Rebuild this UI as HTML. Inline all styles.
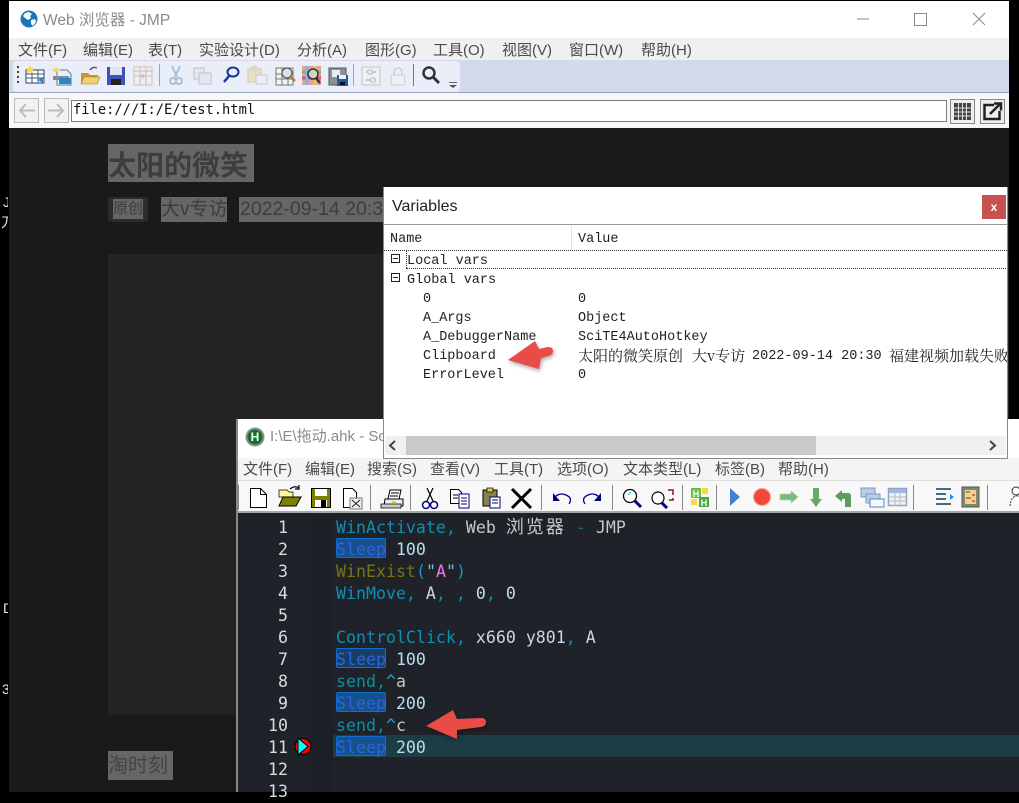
<!DOCTYPE html>
<html lang="zh"><head><meta charset="utf-8"><title>Web 浏览器 - JMP</title>
<style>
html,body{margin:0;padding:0;background:#000}
body{position:relative;width:1019px;height:792px;overflow:hidden;font-family:"Liberation Sans","Noto Sans CJK SC",sans-serif}
.a{position:absolute}
.t{position:absolute;white-space:nowrap}
.m{position:absolute;white-space:nowrap;font-size:15px;line-height:22px;color:#4a4a4a}
.sel{position:absolute;background:#666;color:#3d3d3d;white-space:nowrap}
.v{position:absolute;white-space:nowrap;font-family:"Liberation Mono","Noto Serif CJK SC",monospace;font-size:13.5px;line-height:19px;color:#222}
.cj{font-family:"Noto Serif CJK SC",serif;font-size:15px}
.ln{position:absolute;left:238px;width:50px;margin-top:2px;text-align:right;font-family:"DejaVu Sans Mono",monospace;font-size:16.6px;line-height:22px;color:#d8dde0}
.c{position:absolute;left:336px;margin-top:2px;white-space:pre;font-family:"DejaVu Sans Mono","Noto Sans CJK SC",monospace;font-size:16.6px;line-height:22px;color:#b9dcef}
.k{color:#0d8fb3}.s{color:#0b8f9e}
.bx{position:absolute;left:336px;width:48px;height:18px;background:#17518c;border:1px solid #0f6fd0;border-radius:2px}
.slp{color:#2f62dc}
</style></head><body>

<!-- left strip desktop -->
<div class="a" style="left:0;top:0;width:8px;height:792px;background:#000;overflow:hidden">
<span class="t" style="left:3px;top:193px;color:#dfe9ff;font-size:14px;line-height:18px">J</span>
<span class="t" style="left:1px;top:213px;color:#dfe9ff;font-size:14px;line-height:18px">刀</span>
<span class="t" style="left:3px;top:599px;color:#dfe9ff;font-size:14px;line-height:18px">D</span>
<span class="t" style="left:2px;top:680px;color:#dfe9ff;font-size:14px;line-height:18px">3</span>
</div>

<!-- web window -->
<div class="a" style="left:9px;top:1px;width:1000px;height:37px;background:#fff"></div>
<div class="a" style="left:9px;top:38px;width:1000px;height:22px;background:#f0f0f0"></div>
<div class="a" style="left:9px;top:60px;width:1000px;height:33px;background:#d3d9ec;border-bottom:1px solid #98a3c6;box-sizing:border-box"></div>
<div class="a" style="left:13px;top:61px;width:447px;height:31px;background:#e9eef9;border-radius:4px"></div>
<div class="a" style="left:9px;top:93px;width:1000px;height:35px;background:#f7f7f7"></div>
<div class="a" style="left:9px;top:128px;width:1000px;height:664px;background:#1a1a1a"></div>

<svg class="a" style="left:20px;top:10px" width="19" height="19" viewBox="0 0 19 19"><circle cx="9" cy="9" r="8.5" fill="#1b78b8"/><path d="M5 3l4-1 3 2-2 2 1 2-3 2-3-2-2-2zM11 10l4-1 1 3-3 4-2-2z" fill="#fff"/></svg>
<span class="t" style="left:43px;top:10px;font-size:15.500px;line-height:22px;color:#8a8a8a">Web 浏览器 - JMP</span>
<svg class="a" style="left:850px;top:8px" width="150" height="22"><path d="M7 11h12" stroke="#8a8a8a" fill="none"/><rect x="64.500" y="5.500" width="12" height="12" fill="none" stroke="#8a8a8a"/><path d="M123 5l12 12M135 5l-12 12" stroke="#888" fill="none"/></svg>

<span class="m" style="left:18px;top:40px">文件(F)</span>
<span class="m" style="left:83px;top:40px">编辑(E)</span>
<span class="m" style="left:148px;top:40px">表(T)</span>
<span class="m" style="left:199px;top:40px">实验设计(D)</span>
<span class="m" style="left:297px;top:40px">分析(A)</span>
<span class="m" style="left:365px;top:40px">图形(G)</span>
<span class="m" style="left:433px;top:40px">工具(O)</span>
<span class="m" style="left:502px;top:40px">视图(V)</span>
<span class="m" style="left:569px;top:40px">窗口(W)</span>
<span class="m" style="left:641px;top:40px">帮助(H)</span>

<!-- web toolbar icons -->
<svg class="a" style="left:0;top:60px" width="470" height="33" viewBox="0 60 470 33">
<g fill="#444"><rect x="17" y="66" width="2" height="2"/><rect x="17" y="71" width="2" height="2"/><rect x="17" y="76" width="2" height="2"/><rect x="17" y="81" width="2" height="2"/></g>
<rect x="26" y="70" width="18" height="13" fill="#fff" stroke="#345"/><path d="M26 74h18M26 78h18M32 70v13M38 70v13" stroke="#457"/><path d="M30 65l1.500 3 3 .5-2 2 .5 3-3-1.500-3 1.500.5-3-2-2 3-.5z" fill="#f2da5a"/><path d="M38 80l5-3v6z" fill="#2a7fc8"/>
<path d="M57 70h10l4 4v11H57z" fill="#e8f0f6" stroke="#5a7f96"/><path d="M53 76h16v4H53z" fill="#889"/><path d="M56 66l1.500 3 3 .5-2 2-2.500 1-2.500-1-2-2 3-.5z" fill="#f2da5a"/><rect x="59" y="78" width="12" height="6" fill="#2e86c0"/>
<path d="M81 73h7l2 2h8v9H81z" fill="#c9962e"/><path d="M81 84l3-7h16l-3 7z" fill="#f2cf72" stroke="#a87a20" stroke-width=".6"/><path d="M90 70q3-4 7-2" stroke="#556" fill="none" stroke-width="1.500"/>
<rect x="107" y="67" width="18" height="18" fill="#3d4fb8"/><rect x="110" y="67" width="12" height="8" fill="#dfe3ef"/><rect x="111" y="79" width="10" height="6" fill="#222"/>
<rect x="134" y="67" width="18" height="18" fill="#f0eeee" stroke="#c8c4c4"/><path d="M134 71h18M140 67v18M146 67v18M134 76h18" stroke="#d3b8b8" fill="none"/><path d="M133 85l8-8 2 2 2-5-5 1 2 1-8 8z" fill="#a8c4e8"/>
<rect x="159" y="64" width="1" height="22" fill="#9aa"/>
<path d="M172 66l5 11M180 66l-5 11" stroke="#aebed0" stroke-width="2" fill="none"/><circle cx="173" cy="81" r="3" fill="none" stroke="#a6bfd8" stroke-width="2"/><circle cx="179" cy="81" r="3" fill="none" stroke="#a6bfd8" stroke-width="2"/>
<rect x="194" y="68" width="10" height="11" fill="#e3e8f0" stroke="#b7c2d2"/><rect x="199" y="73" width="12" height="11" fill="#e3e8f0" stroke="#b7c2d2"/>
<ellipse cx="233" cy="72" rx="5.500" ry="4.500" fill="none" stroke="#12389e" stroke-width="2"/><path d="M229 76l-5 6" stroke="#12389e" stroke-width="2.500"/>
<rect x="248" y="69" width="13" height="13" fill="#e9dfc8" stroke="#d5c8a8"/><rect x="251" y="66" width="6" height="5" fill="#dcd6c8"/><rect x="256" y="75" width="11" height="9" fill="#eceef2" stroke="#c5cad2"/>
<rect x="276" y="68" width="17" height="17" fill="#f3f3f3" stroke="#777"/><path d="M276 74h17M276 79h17M282 68v17M288 68v17" stroke="#777"/><circle cx="287" cy="73" r="5" fill="#dde" stroke="#443"/><path d="M291 77l4 4" stroke="#b87a20" stroke-width="2.500"/>
<rect x="302" y="66" width="19" height="19" fill="#e6a0a0"/><path d="M302 72h19" stroke="#6fbf6f" stroke-width="3"/><path d="M302 78h19" stroke="#d05a7a" stroke-width="3"/><path d="M307 66v19" stroke="#7fb6d8" stroke-width="3"/><path d="M315 66v19" stroke="#dcc860" stroke-width="3"/><circle cx="313" cy="74" r="5" fill="#ddd" fill-opacity=".7" stroke="#333" stroke-width="1.500"/><path d="M316 78l4 5" stroke="#333" stroke-width="2.500"/>
<path d="M329 68h17v17h-17z" fill="#8e8e9e" stroke="#555"/><rect x="332" y="70" width="8" height="7" fill="#e6ecf4"/><rect x="337" y="75" width="11" height="11" fill="#1d5da0"/><rect x="339" y="75" width="7" height="4" fill="#eef"/><rect x="340" y="82" width="5" height="3" fill="#111"/>
<rect x="353" y="64" width="1" height="22" fill="#9aa"/>
<rect x="362" y="67" width="18" height="18" fill="#eef0f2" stroke="#c2c6ca" rx="1"/><path d="M366 72h10M366 80h10" stroke="#c4c8cc" stroke-width="2"/><rect x="368" y="70" width="4" height="4" fill="#eef0f2" stroke="#bfc3c7"/><rect x="371" y="78" width="4" height="4" fill="#eef0f2" stroke="#bfc3c7"/>
<rect x="391" y="75" width="14" height="10" fill="#eef0f2" stroke="#cbcfd3" rx="1"/><path d="M394 75v-3a4 4 0 018 0v3" fill="none" stroke="#cbcfd3" stroke-width="1.500"/>
<rect x="413" y="64" width="1" height="22" fill="#777"/>
<circle cx="429" cy="73" r="5.500" fill="none" stroke="#333" stroke-width="2.500"/><path d="M433 77l6 6" stroke="#333" stroke-width="3"/>
<rect x="449" y="82" width="8" height="1" fill="#666"/><path d="M449 85h8l-4 3z" fill="#555"/>
</svg>

<!-- url row -->
<svg class="a" style="left:14px;top:98px" width="56" height="27"><rect x=".5" y=".5" width="24" height="24" fill="#f2f2f2" stroke="#bbb"/><path d="M21 12.500H6M12 6l-6 6.500L12 19" fill="none" stroke="#bdbdbd" stroke-width="2"/><rect x="30.500" y=".5" width="24" height="24" fill="#f2f2f2" stroke="#bbb"/><path d="M34 12.500h15M43 6l6 6.500L43 19" fill="none" stroke="#bdbdbd" stroke-width="2"/></svg>
<div class="a" style="left:71px;top:100px;width:874px;height:20px;background:#fff;border:1px solid #7c7c7c"></div>
<span class="t" style="left:73px;top:100px;font-family:'DejaVu Sans Mono',monospace;font-size:13.75px;line-height:20px;color:#111">file:///I:/E/test.html</span>
<svg class="a" style="left:950px;top:99px" width="56" height="26"><rect x=".5" y=".5" width="24" height="24" fill="#eee" stroke="#888"/><rect x="4" y="4" width="17" height="17" fill="#444"/><path d="M4 9h17M4 13h17M4 17h17M8.500 4v17M12.500 4v17M16.500 4v17" stroke="#ddd"/><rect x="30.500" y=".5" width="24" height="24" fill="#eee" stroke="#888"/><path d="M44 6h-9.500v14h15v-8" fill="none" stroke="#222" stroke-width="2.500"/><path d="M40 15l10-10M44 4.500h7v7" fill="none" stroke="#222" stroke-width="2.500"/></svg>

<!-- page content -->
<div class="sel" style="left:108px;top:144px;width:146px;height:38px;font-weight:bold;font-size:28px;line-height:43px;overflow:hidden">太阳的微笑</div>
<div class="a" style="left:108px;top:197px;width:40px;height:25px;background:#2b2b2b;border-radius:3px"></div>
<div class="sel" style="left:113px;top:199px;width:30px;height:20px;font-size:15px;line-height:20px">原创</div>
<div class="sel" style="left:161px;top:197px;width:66px;height:25px;font-size:19px;line-height:25px">大v专访</div>
<div class="sel" style="left:239px;top:197px;width:150px;height:25px;font-size:19.500px;line-height:25px;text-indent:1px;overflow:hidden">2022-09-14 20:30</div>
<div class="a" style="left:108px;top:254px;width:901px;height:461px;background:#232323"></div>
<div class="sel" style="left:108px;top:751px;width:65px;height:29px;font-size:20px;line-height:31px;color:#444">淘时刻</div>

<!-- scite window -->
<div class="a" style="left:236px;top:419px;width:783px;height:61px;background:#fff"></div>
<div class="a" style="left:236px;top:419px;width:2px;height:373px;background:#888"></div>
<svg class="a" style="left:245px;top:427px" width="20" height="20"><circle cx="10" cy="10" r="9.500" fill="#8f8f8f"/><circle cx="10" cy="10" r="7.500" fill="#14702e"/><text x="10" y="14" font-size="12" font-family="Liberation Sans" font-weight="bold" text-anchor="middle" fill="#fff">H</text></svg>
<span class="t" style="left:270px;top:426px;font-size:15px;line-height:22px;color:#8a8a8a">I:\E\拖动.ahk - SciTE4AutoHotkey</span>
<div class="a" style="left:238px;top:458px;width:781px;height:22px;background:#f4f4f4"></div>
<span class="m" style="left:243px;top:459px">文件(F)</span>
<span class="m" style="left:305px;top:459px">编辑(E)</span>
<span class="m" style="left:367px;top:459px">搜索(S)</span>
<span class="m" style="left:430px;top:459px">查看(V)</span>
<span class="m" style="left:494px;top:459px">工具(T)</span>
<span class="m" style="left:557px;top:459px">选项(O)</span>
<span class="m" style="left:623px;top:459px">文本类型(L)</span>
<span class="m" style="left:715px;top:459px">标签(B)</span>
<span class="m" style="left:778px;top:459px">帮助(H)</span>
<div class="a" style="left:238px;top:480px;width:781px;height:33px;background:#f8f8f8;border-top:1px solid #ddd;border-bottom:2px solid #a8a8a8;box-sizing:border-box"></div>

<svg class="a" style="left:0;top:480px" width="1019" height="34" viewBox="0 480 1019 34">
<g fill="#888"><rect x="238" y="485" width="1" height="25"/><rect x="370" y="485" width="1" height="25"/><rect x="410" y="485" width="1" height="25"/><rect x="541" y="485" width="1" height="25"/><rect x="612" y="485" width="1" height="25"/><rect x="682" y="485" width="1" height="25"/><rect x="716" y="485" width="1" height="25"/><rect x="913" y="485" width="1" height="25"/><rect x="987" y="485" width="1" height="25"/></g>
<path d="M250.500 488.500h10l6 6v13h-16z" fill="#fff" stroke="#000"/><path d="M260.500 488.500v6h6" fill="none" stroke="#000"/>
<path d="M279 490h8l2 2h4v5h-14z" fill="#fff6a0" stroke="#000" stroke-width=".7"/><path d="M279 506l4-9h18l-5 9z" fill="#7f7f00" stroke="#000"/><path d="M290 489q5-4 9-1M299 485v4h-4" fill="none" stroke="#000" stroke-width="1.200"/>
<rect x="311.500" y="488.500" width="19" height="19" fill="#7f7f00" stroke="#000"/><rect x="315" y="489" width="12" height="7" fill="#fff"/><rect x="315" y="500" width="12" height="7" fill="#fff"/><rect x="321" y="500" width="5" height="7" fill="#000"/>
<path d="M343.500 488.500h9l4 4v6h-4v9h-9z" fill="#fff" stroke="#000"/><rect x="350" y="498" width="12" height="11" fill="#eee" stroke="#777"/><path d="M352 500l8 7M360 500l-8 7" stroke="#222"/>
<path d="M385 499h18v7h-19z" fill="#eee" stroke="#000"/><path d="M388 499l2-9h11l-2 9z" fill="#fff" stroke="#000"/><path d="M391 493h8M390 496h8" stroke="#000"/><path d="M381 504h20v4h-20z" fill="#ccc" stroke="#000" stroke-width=".8"/><rect x="392" y="501" width="4" height="2" fill="#dd0"/>
<path d="M427 488l6 13M433 488l-6 13" stroke="#000" fill="none" stroke-width="1.200"/><circle cx="426" cy="505" r="3.500" fill="none" stroke="#00007f" stroke-width="1.500"/><circle cx="434" cy="505" r="3.500" fill="none" stroke="#00007f" stroke-width="1.500"/>
<path d="M450.500 489.500h8l3 3v11h-11z" fill="#fff" stroke="#000"/><rect x="459" y="494" width="10" height="14" fill="#fff" stroke="#00007f"/><path d="M461 498h6M461 501h6M461 504h6" stroke="#00007f"/><path d="M453 495h5M453 498h5" stroke="#000"/>
<rect x="483" y="490" width="14" height="16" fill="#88834a" stroke="#000"/><rect x="487" y="488" width="6" height="4" fill="#ddcc33" stroke="#000" stroke-width=".7"/><rect x="490" y="497" width="10" height="11" fill="#fff" stroke="#00007f"/><path d="M492 500h6M492 503h6" stroke="#00007f"/>
<path d="M512 489l19 19M531 489l-19 19" stroke="#000" stroke-width="3"/>
<path d="M554 498q5-6 12-3t3 9" fill="none" stroke="#00007f" stroke-width="1.300"/><path d="M553 493v8h7z" fill="#00007f"/>
<path d="M600 498q-5-6-12-3t-3 9" fill="none" stroke="#00007f" stroke-width="1.300"/><path d="M601 493v8h-7z" fill="#00007f"/>
<circle cx="630" cy="496" r="6.500" fill="#fff" stroke="#000" stroke-width="1.300"/><path d="M628 495l3-3" stroke="#3bd" stroke-width="1.200"/><path d="M635 501l6 6" stroke="#00007f" stroke-width="3"/>
<circle cx="658" cy="498" r="6" fill="#fff" stroke="#000" stroke-width="1.200"/><path d="M662 503l5 5" stroke="#00007f" stroke-width="3"/><path d="M668 490h5v5M673 498v2h-4" fill="none" stroke="#8b1a1a" stroke-width="1.500"/>
<rect x="691" y="488" width="10" height="10" fill="#6fbb4f"/><rect x="699" y="497" width="10" height="10" fill="#4aa83f"/><path d="M702 488h6v6h-6zM691 499h6v6h-6z" fill="#eedf3a"/><text x="696" y="497" font-size="9" font-weight="bold" font-family="Liberation Sans" text-anchor="middle" fill="#fff">H</text><text x="704" y="506" font-size="9" font-weight="bold" font-family="Liberation Sans" text-anchor="middle" fill="#fff">H</text>
<path d="M730 488l10 9-10 9z" fill="#3f82cf"/>
<circle cx="762" cy="497" r="8.500" fill="#f4473a" stroke="#f3a79f" stroke-width="1.200"/>
<path d="M780 494h11v-3l7 6-7 6v-3h-11z" fill="#7cb87c" stroke="#a8d4a8" stroke-width=".8"/>
<path d="M813 488h6v11h3l-6 8-6-8h3z" fill="#6aa86a"/>
<path d="M851 507v-11q0-3-3-3h-6v-3l-7 6 7 6v-3h3v8z" fill="#5c9c5c"/>
<rect x="861" y="488" width="14" height="9" fill="#b8cce8" stroke="#7a9cc8"/><rect x="866" y="494" width="14" height="9" fill="#b8cce8" stroke="#7a9cc8"/><rect x="870" y="499" width="14" height="8" fill="#f4f8ff" stroke="#5a84b8"/>
<rect x="888.500" y="488.500" width="18" height="17" fill="#eef2f8" stroke="#8ea6c8" stroke-width="1.500"/><rect x="889" y="489" width="17" height="4" fill="#9db8dc"/><path d="M889 497h17M889 501h17M895 493v12M900 493v12" stroke="#bbb"/>
<path d="M936 489h15M936 494h10M936 499h10M936 504h15" stroke="#4a6a7a" stroke-width="2"/><path d="M954 497l-4-3v6z" fill="#1e90ff"/>
<rect x="962" y="487" width="17" height="20" fill="#7e8a6a" stroke="#555"/><rect x="965" y="490" width="11" height="14" fill="#e6d69a"/><path d="M966 492h4M972 495h3M966 498h5M972 501h3" stroke="#d4572a" stroke-width="1.500"/>
<circle cx="1016" cy="491" r="4" fill="#fff" stroke="#333"/><path d="M1010 506q1-9 6-10t8 6" fill="#fff" stroke="#333" stroke-dasharray="2 1"/>
</svg>

<!-- editor -->
<div class="a" style="left:238px;top:513px;width:781px;height:279px;background:#1f2329;overflow:hidden"></div>
<div class="a" style="left:312px;top:515px;width:21px;height:277px;background:#1c2026"></div>
<div class="a" style="left:333px;top:735px;width:686px;height:22px;background:#1c3d44"></div>

<div class="ln" style="top:515px">1</div><div class="ln" style="top:537px">2</div><div class="ln" style="top:559px">3</div><div class="ln" style="top:581px">4</div><div class="ln" style="top:603px">5</div><div class="ln" style="top:625px">6</div><div class="ln" style="top:647px">7</div><div class="ln" style="top:669px">8</div><div class="ln" style="top:691px">9</div><div class="ln" style="top:713px">10</div><div class="ln" style="top:735px">11</div><div class="ln" style="top:757px">12</div><div class="ln" style="top:779px">13</div>

<div class="bx" style="top:538px"></div>
<div class="bx" style="top:648px;background:#173f66"></div>
<div class="bx" style="top:692px"></div>
<div class="bx" style="top:736px"></div>

<div class="c" style="top:515px"><span class="k">WinActivate,</span><span style="color:#c8c8c8"> Web </span><span style="color:#c8c8c8;font-family:'Noto Sans CJK SC',sans-serif;font-size:18px;letter-spacing:2px;line-height:1px">浏览器</span><span style="color:#c8c8c8"> </span><span style="color:#0d6f88">-</span><span style="color:#c8c8c8"> JMP</span></div>
<div class="c" style="top:537px"><span class="slp">Sleep</span> 100</div>
<div class="c" style="top:559px"><span style="color:#76760e">WinExist</span><span style="color:#1296c4">(</span><span style="color:#7cb8e8">"</span><span style="color:#ea78e8">A</span><span style="color:#7cb8e8">"</span><span style="color:#1296c4">)</span></div>
<div class="c" style="top:581px"><span class="k">WinMove,</span><span style="color:#c8d8e0"> A</span><span class="k">, ,</span> 0<span class="k">,</span> 0</div>
<div class="c" style="top:625px"><span class="k">ControlClick,</span><span style="color:#c8d8e0"> x660 y801</span><span class="k">,</span><span style="color:#c8d8e0"> A</span></div>
<div class="c" style="top:647px"><span class="slp">Sleep</span> 100</div>
<div class="c" style="top:669px"><span class="s">send,</span><span style="color:#2aa3c8">^</span><span style="color:#c8c8c8">a</span></div>
<div class="c" style="top:691px"><span class="slp">Sleep</span> 200</div>
<div class="c" style="top:713px"><span class="s">send,</span><span style="color:#2aa3c8">^</span><span style="color:#c8c8c8">c</span></div>
<div class="c" style="top:735px"><span class="slp">Sleep</span> 200</div>

<svg class="a" style="left:293px;top:736px" width="20" height="21"><circle cx="10" cy="10.500" r="8" fill="#f00" stroke="#000"/><path d="M5 2v17l10-8.500z" fill="#0ff" stroke="#000"/></svg>

<!-- arrow 2 -->
<svg class="a" style="left:420px;top:704px;filter:drop-shadow(1px 2px 2px rgba(0,0,0,.35))" width="72" height="42" viewBox="420 704 72 42"><path d="M426 726L453 710 457 719 481 718Q486 718 486 722 486 726 481 727L457 730 457 739Z" fill="#e94c46"/></svg>

<!-- variables window -->
<div class="a" style="left:383px;top:187px;width:625px;height:272px;background:#fff;box-sizing:border-box;border-left:1px solid #888;border-right:1px solid #888;border-bottom:1px solid #888;overflow:hidden">
<div class="a" style="left:0;top:37px;width:623px;height:1px;background:#999"></div>
<span class="t" style="left:8px;top:9px;font-size:16px;line-height:22px;color:#222">Variables</span>
<div class="a" style="left:598px;top:8px;width:24px;height:24px;background:#c75050;color:#fff;text-align:center;font:bold 12px/24px 'Liberation Sans',sans-serif">x</div>
<div class="a" style="left:187px;top:39px;width:1px;height:24px;background:#e4e4e4"></div>
<div class="a" style="left:0;top:63px;width:623px;border-top:1px dotted #333"></div>
<div class="a" style="left:22px;top:81px;width:600px;border-top:1px dotted #333"></div>
<div class="a" style="left:22px;top:64px;height:17px;border-left:1px dotted #333"></div>
<span class="v" style="left:6px;top:43px">Name</span><span class="v" style="left:194px;top:43px">Value</span>
<svg class="a" style="left:7px;top:67px" width="10" height="30"><rect x=".5" y=".5" width="8" height="8" fill="#fff" stroke="#222"/><path d="M2 4.500h5" stroke="#222"/><rect x=".5" y="19.500" width="8" height="8" fill="#fff" stroke="#222"/><path d="M2 23.500h5" stroke="#222"/></svg>
<span class="v" style="left:23px;top:65px">Local vars</span>
<span class="v" style="left:23px;top:84px">Global vars</span>
<span class="v" style="left:39px;top:103px">0</span><span class="v" style="left:194px;top:103px">0</span>
<span class="v" style="left:39px;top:122px">A_Args</span><span class="v" style="left:194px;top:122px">Object</span>
<span class="v" style="left:39px;top:141px">A_DebuggerName</span><span class="v" style="left:194px;top:141px">SciTE4AutoHotkey</span>
<span class="v" style="left:39px;top:160px">Clipboard</span>
<span class="v cj" style="left:194px;top:159px">太阳的微笑原创</span><span class="v cj" style="left:308px;top:159px">大v专访</span><span class="v" style="left:368px;top:160px">2022-09-14 20:30</span><span class="v cj" style="left:505px;top:159px">福建视频加载失败</span>
<span class="v" style="left:39px;top:179px">ErrorLevel</span><span class="v" style="left:194px;top:179px">0</span>
<div class="a" style="left:1px;top:249px;width:621px;height:19px;background:#f0f0f0"></div>
<div class="a" style="left:22px;top:249px;width:410px;height:19px;background:#c9c9c9"></div>
<svg class="a" style="left:0;top:249px" width="623" height="19"><path d="M11 5l-5 4.500 5 4.500M606 5l5 4.500-5 4.500" fill="none" stroke="#444" stroke-width="2"/></svg>
</div>

<!-- arrow 1 -->
<svg class="a" style="left:500px;top:335px;filter:drop-shadow(1px 2px 2px rgba(0,0,0,.35))" width="60" height="40" viewBox="500 335 60 40"><path d="M508 360L535 341 539 349 548 347Q553 347 553 351 553 355 548 356L541 358 539 369Z" fill="#e94c46"/></svg>

</body></html>
